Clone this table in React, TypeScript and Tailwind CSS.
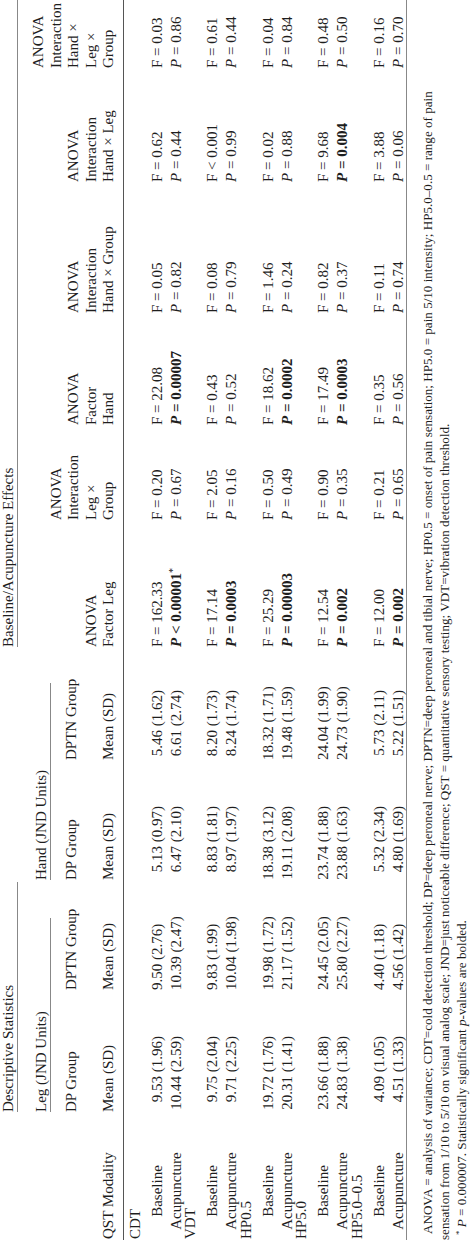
const serif = "font-['Liberation_Serif','Times_New_Roman',serif]"

type Stat = { f: string; p: string; bold?: boolean; star?: boolean }

type Group = {
  name: string
  base: string[]
  acu: string[]
  stats: Stat[]
}

const groups: Group[] = [
  {
    name: 'CDT',
    base: ['9.53 (1.96)', '9.50 (2.76)', '5.13 (0.97)', '5.46 (1.62)'],
    acu: ['10.44 (2.59)', '10.39 (2.47)', '6.47 (2.10)', '6.61 (2.74)'],
    stats: [
      { f: '= 162.33', p: '< 0.00001', bold: true, star: true },
      { f: '= 0.20', p: '= 0.67' },
      { f: '= 22.08', p: '= 0.00007', bold: true },
      { f: '= 0.05', p: '= 0.82' },
      { f: '= 0.62', p: '= 0.44' },
      { f: '= 0.03', p: '= 0.86' }
    ]
  },
  {
    name: 'VDT',
    base: ['9.75 (2.04)', '9.83 (1.99)', '8.83 (1.81)', '8.20 (1.73)'],
    acu: ['9.71 (2.25)', '10.04 (1.98)', '8.97 (1.97)', '8.24 (1.74)'],
    stats: [
      { f: '= 17.14', p: '= 0.0003', bold: true },
      { f: '= 2.05', p: '= 0.16' },
      { f: '= 0.43', p: '= 0.52' },
      { f: '= 0.08', p: '= 0.79' },
      { f: '< 0.001', p: '= 0.99' },
      { f: '= 0.61', p: '= 0.44' }
    ]
  },
  {
    name: 'HP0.5',
    base: ['19.72 (1.76)', '19.98 (1.72)', '18.38 (3.12)', '18.32 (1.71)'],
    acu: ['20.31 (1.41)', '21.17 (1.52)', '19.11 (2.08)', '19.48 (1.59)'],
    stats: [
      { f: '= 25.29', p: '= 0.00003', bold: true },
      { f: '= 0.50', p: '= 0.49' },
      { f: '= 18.62', p: '= 0.0002', bold: true },
      { f: '= 1.46', p: '= 0.24' },
      { f: '= 0.02', p: '= 0.88' },
      { f: '= 0.04', p: '= 0.84' }
    ]
  },
  {
    name: 'HP5.0',
    base: ['23.66 (1.88)', '24.45 (2.05)', '23.74 (1.88)', '24.04 (1.99)'],
    acu: ['24.83 (1.38)', '25.80 (2.27)', '23.88 (1.63)', '24.73 (1.90)'],
    stats: [
      { f: '= 12.54', p: '= 0.002', bold: true },
      { f: '= 0.90', p: '= 0.35' },
      { f: '= 17.49', p: '= 0.0003', bold: true },
      { f: '= 0.82', p: '= 0.37' },
      { f: '= 9.68', p: '= 0.004', bold: true },
      { f: '= 0.48', p: '= 0.50' }
    ]
  },
  {
    name: 'HP5.0–0.5',
    base: ['4.09 (1.05)', '4.40 (1.18)', '5.32 (2.34)', '5.73 (2.11)'],
    acu: ['4.51 (1.33)', '4.56 (1.42)', '4.80 (1.69)', '5.22 (1.51)'],
    stats: [
      { f: '= 12.00', p: '= 0.002', bold: true },
      { f: '= 0.21', p: '= 0.65' },
      { f: '= 0.35', p: '= 0.56' },
      { f: '= 0.11', p: '= 0.74' },
      { f: '= 3.88', p: '= 0.06' },
      { f: '= 0.16', p: '= 0.70' }
    ]
  }
]

// column widths along the (unrotated) table
const colW = [
  'w-[128px]',
  'w-[122px]',
  'w-[110px]',
  'w-[120px]',
  'w-[113px]',
  'w-[127px]',
  'w-[95px]',
  'w-[112px]',
  'w-[131px]',
  'w-[114px]',
  'w-[68px]'
]
const meanPad = ['pr-[46px]', 'pr-[50px]', 'pr-[46px]', 'pr-[43px]']

const anovaHeads = [
  ['ANOVA', 'Factor Leg'],
  ['ANOVA', 'Interaction', 'Leg ×', 'Group'],
  ['ANOVA', 'Factor', 'Hand'],
  ['ANOVA', 'Interaction', 'Hand × Group'],
  ['ANOVA', 'Interaction', 'Hand × Leg'],
  ['ANOVA', 'Interaction', 'Hand ×', 'Leg ×', 'Group']
]

export default function App() {
  return (
    <div className="w-[474px] h-[1240px] overflow-hidden bg-white">
      {/* the page is a landscape table turned a quarter left */}
      <div
        className={`w-[1240px] h-[474px] origin-top-left [transform:translateY(1240px)_rotate(-90deg)] bg-white text-[15px] text-[#1e1e1e] ${serif}`}
      >
        <Header />
        <div className="mt-[4.5px] h-[1.5px] bg-[#555]" />
        <div className="mt-[1.5px]">
          {groups.map(g => (
            <GroupRows key={g.name} g={g} />
          ))}
        </div>
        <div className="mt-[3px] h-px bg-[#888]" />
        <Notes />
      </div>
    </div>
  )
}

function Header() {
  return (
    <>
      <div className="flex leading-[17px] whitespace-nowrap">
        <div className="w-[128px] shrink-0" />
        <div className="w-[465px] shrink-0">
          <div className="w-[230px] border-b border-[#888]">Descriptive Statistics</div>
        </div>
        <div className="flex-1 border-b border-[#888]">Baseline/Acupuncture Effects</div>
      </div>

      <div className="flex items-end h-[100px] whitespace-nowrap">
        <div className="w-[128px] shrink-0 leading-[18px] pl-px pb-px">QST Modality</div>

        <div className="w-[465px] shrink-0 self-stretch flex flex-col">
          <div className="pt-[15px] flex leading-[17px]">
            <div className="w-[194px] shrink-0 border-b border-[#888]">Leg (JND Units)</div>
            <div className="w-[38px] shrink-0" />
            <div className="w-[197px] shrink-0 border-b border-[#888]">Hand (JND Units)</div>
          </div>
          <div className="mt-[11px] flex leading-[18px]">
            <div className="w-[122px] shrink-0">DP Group</div>
            <div className="w-[110px] shrink-0">DPTN Group</div>
            <div className="w-[120px] shrink-0">DP Group</div>
            <div className="w-[113px] shrink-0">DPTN Group</div>
          </div>
          <div className="mt-[19px] flex leading-[18px]">
            <div className="w-[122px] shrink-0">Mean (SD)</div>
            <div className="w-[110px] shrink-0">Mean (SD)</div>
            <div className="w-[120px] shrink-0">Mean (SD)</div>
            <div className="w-[113px] shrink-0">Mean (SD)</div>
          </div>
        </div>

        {anovaHeads.map((lines, i) => (
          <div key={i} className={`${colW[i + 5]} shrink-0 leading-[17.5px] pb-[0.5px]`}>
            {lines.map(l => (
              <div key={l}>{l}</div>
            ))}
          </div>
        ))}
      </div>
    </>
  )
}

function GroupRows({ g }: { g: Group }) {
  return (
    <div className="h-[55.5px] leading-[19px] whitespace-nowrap">
      <div className="h-[22px] pl-px">{g.name}</div>
      <div className="flex">
        <div className="w-[128px] shrink-0">
          <div className="w-[98px] text-center">Baseline</div>
          <div className="w-[98px] text-center">Acupuncture</div>
        </div>

        {g.base.map((b, i) => (
          <div key={i} className={`${colW[i + 1]} ${meanPad[i]} shrink-0 text-right`}>
            <div>{b}</div>
            <div>{g.acu[i]}</div>
          </div>
        ))}

        {g.stats.map((s, i) => (
          <div key={i} className={`${colW[i + 5]} shrink-0`}>
            <div>F {s.f}</div>
            <div className={s.bold ? 'font-bold' : ''}>
              <i>P</i> {s.p}
              {s.star && <span className="relative -top-[5px] text-[10px] font-normal">*</span>}
            </div>
          </div>
        ))}
      </div>
    </div>
  )
}

function Notes() {
  return (
    <div className="mt-[12px] text-[13.1px] leading-[17px] whitespace-nowrap">
      <div className="pl-[6px]">
        ANOVA = analysis of variance; CDT=cold detection threshold; DP=deep peroneal nerve; DPTN=deep
        peroneal and tibial nerve; HP0.5 = onset of pain sensation; HP5.0 = pain 5/10 intensity; HP5.0–0.5 =
        range of pain
      </div>
      <div>
        sensation from 1/10 to 5/10 on visual analog scale; JND=just noticeable difference; QST = quantitative
        sensory testing; VDT=vibration detection threshold.
      </div>
      <div className="pl-[5px]">
        <span className="relative -top-[4px] text-[9px]">*</span> <i>P</i> = 0.000007. Statistically
        significant <i>p</i>-values are bolded.
      </div>
    </div>
  )
}
